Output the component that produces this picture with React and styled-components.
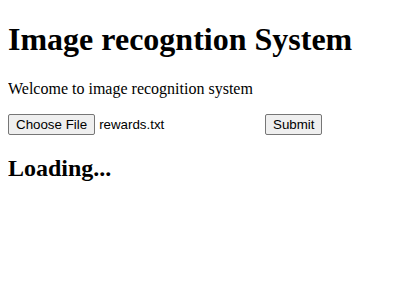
import React from "react";
import styled, { createGlobalStyle } from "styled-components";

const GlobalStyle = createGlobalStyle`
  body {
    margin: 0 8px 8px;
    font-family: "Liberation Serif", "Times New Roman", serif;
    background: #fff;
    color: #000;
  }
`;

const Title = styled.h1`
  font-size: 32px;
  font-weight: bold;
  margin: 21.44px 0;
`;

const Intro = styled.p`
  font-size: 16px;
  margin: 16px 0;
`;

const UploadForm = styled.form`
  display: block;
  font-size: 16px;
`;

const FilePicker = styled.label`
  display: inline-block;
  width: 253px;
  white-space: nowrap;
  font-family: "Liberation Sans", Arial, sans-serif;
  font-size: 13.333px;
  vertical-align: baseline;
`;

const FormButton = styled.button`
  font-family: "Liberation Sans", Arial, sans-serif;
  font-size: 13.333px;
  color: #000;
  background: #efefef;
  border: 1px solid #767676;
  border-radius: 2px;
  padding: 2px 7px;
  margin: ${(props) => (props.$file ? "0 4px 0 0" : "0")};
  line-height: normal;
  cursor: default;
`;

const FileName = styled.span`
  white-space: nowrap;
`;

const Status = styled.h2`
  font-size: 24px;
  font-weight: bold;
  margin: 19.92px 0;
`;

function App() {
  return (
    <>
      <GlobalStyle />
      <Title>Image recogntion System</Title>
      <Intro>Welcome to image recognition system</Intro>
      <UploadForm onSubmit={(e) => e.preventDefault()}>
        <FilePicker>
          <FormButton type="button" $file>
            Choose File
          </FormButton>
          <FileName>rewards.txt</FileName>
        </FilePicker>{" "}
        <FormButton type="submit">Submit</FormButton>
      </UploadForm>
      <Status>Loading...</Status>
    </>
  );
}

export default App;
